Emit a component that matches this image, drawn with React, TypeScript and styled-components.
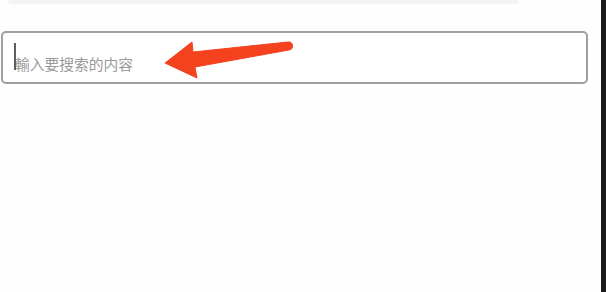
import React from "react";
import styled, { createGlobalStyle } from "styled-components";

const GlobalStyle = createGlobalStyle`
  html, body {
    margin: 0;
    padding: 0;
    background: #ffffff;
    font-family: "Noto Sans CJK SC", "Noto Sans", sans-serif;
  }
`;

const Screen = styled.div`
  display: flex;
  width: 606px;
  height: 292px;
  overflow: hidden;
`;

const Main = styled.main`
  flex: 1;
  display: flex;
  flex-direction: column;
  padding: 0 13px 0 1px;
  background: #fefefe;
`;

const Edge = styled.div`
  width: 5px;
  background: #1b1b1b;
`;

const TopPanel = styled.div`
  height: 4px;
  margin: 0 69px 0 7px;
  background: #f4f4f4;
  border-radius: 0 0 8px 8px;
`;

const SearchWrap = styled.div`
  position: relative;
  margin-top: 27px;
`;

const Field = styled.div`
  position: relative;
  height: 53px;
  box-sizing: border-box;
  border: 2px solid #9f9f9f;
  border-radius: 5px;
  background: #ffffff;
`;

const Input = styled.input`
  display: block;
  width: 100%;
  box-sizing: border-box;
  border: none;
  outline: none;
  background: transparent;
  padding: 20px 12px 9px;
  height: 49px;
  font-family: inherit;
  font-size: 14.75px;
  line-height: 20px;
  color: #333;

  &::placeholder {
    color: #9a9a9a;
  }
`;

const Caret = styled.span`
  position: absolute;
  left: 11px;
  top: 10px;
  width: 2px;
  height: 27px;
  background: #5e5e5e;
`;

const Pointer = styled.svg`
  position: absolute;
  left: 159px;
  top: 7px;
  width: 140px;
  height: 45px;
  pointer-events: none;
`;

export default function App() {
  return (
    <>
      <GlobalStyle />
      <Screen>
        <Main>
          <TopPanel />
          <SearchWrap>
            <Field>
              <Caret />
              <Input placeholder="輸入要搜索的内容" />
            </Field>
            <Pointer viewBox="0 0 140 45">
              <path
                d="M5 25 L32 4 L33 14 L128 4 A4 4 0 0 1 129 12 L35 29 L37 40 Z"
                fill="#f4421f"
                stroke="#f4421f"
                strokeWidth="1"
                strokeLinejoin="round"
              />
            </Pointer>
          </SearchWrap>
        </Main>
        <Edge />
      </Screen>
    </>
  );
}
